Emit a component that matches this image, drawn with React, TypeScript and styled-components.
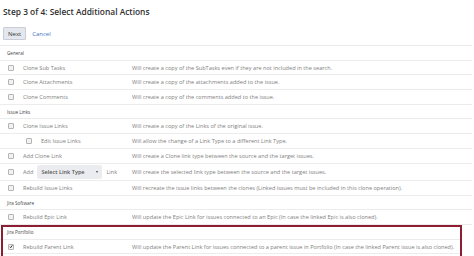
import styled, { createGlobalStyle } from "styled-components";

const GlobalStyle = createGlobalStyle`
  html, body {
    margin: 0;
    padding: 0;
    background: #ffffff;
  }
  body {
    font-family: "Open Sans", "Noto Sans", sans-serif;
    color: #333333;
  }
`;

const Page = styled.div`
  box-sizing: border-box;
  width: 474px;
  height: 256px;
  overflow: hidden;
  padding: 4px 0 0 0;
`;

const Title = styled.h1`
  margin: 0 0 0 3px;
  font-size: 8.4px;
  line-height: 16px;
  font-weight: 600;
  color: #2f2f2f;
`;

const Actions = styled.div`
  display: flex;
  align-items: center;
  gap: 6px;
  margin: 7px 0 5px 3px;
`;

const Button = styled.button`
  box-sizing: border-box;
  height: 13px;
  padding: 0 4px;
  font-family: inherit;
  font-size: 6px;
  color: #333333;
  background: #e4e8ee;
  border: 1px solid #c9ced6;
  border-radius: 1px;
`;

const LinkButton = styled.span`
  font-size: 6px;
  color: #3b73c4;
`;

const Table = styled.div`
  width: 472px;
  border-top: 1px solid #ececec;
`;

const SectionRow = styled.div`
  box-sizing: border-box;
  height: 14.7px;
  display: flex;
  align-items: center;
  padding-left: 7px;
  font-size: 4.6px;
  color: #444444;
  border-bottom: 1px solid #ececec;
`;

const Row = styled.div<{ $tall?: boolean }>`
  box-sizing: border-box;
  height: ${({ $tall }) => ($tall ? "17.5px" : "14.7px")};
  display: grid;
  grid-template-columns: 132px 1fr;
  align-items: center;
  border-bottom: 1px solid #ececec;
  font-size: 5.6px;
  color: #808080;
  white-space: nowrap;
`;

const Label = styled.div<{ $indent?: boolean }>`
  display: flex;
  align-items: center;
  gap: 9px;
  padding-left: ${({ $indent }) => ($indent ? "26px" : "8px")};
`;

const Box = styled.span<{ $checked?: boolean }>`
  box-sizing: border-box;
  width: 6px;
  height: 6px;
  border: 1px solid #b4b4b4;
  border-radius: 1px;
  background: #f2f2f2;
  display: inline-flex;
  align-items: center;
  justify-content: center;
`;

const Select = styled.span`
  display: inline-flex;
  align-items: center;
  justify-content: space-between;
  box-sizing: border-box;
  width: 65px;
  height: 14px;
  padding: 0 4px;
  margin-left: -5px;
  background: #ebecf0;
  border-radius: 2px;
  font-weight: 600;
  color: #555555;
`;

const Caret = styled.span`
  width: 0;
  height: 0;
  border-left: 1.5px solid transparent;
  border-right: 1.5px solid transparent;
  border-top: 2px solid #444444;
`;

const Suffix = styled.span`
  margin-left: -5px;
`;

const Description = styled.div`
  overflow: visible;
`;

/* red annotation frame drawn over the group so the rows keep their columns */
const Highlight = styled.div`
  position: relative;
  width: 462px;

  &::after {
    content: "";
    position: absolute;
    inset: 0 0 -8px 1px;
    border: 2px solid #8c1d32;
    pointer-events: none;
  }
`;

function Checkbox({ checked }: { checked?: boolean }) {
  return (
    <Box $checked={checked}>
      {checked && (
        <svg width="5" height="5" viewBox="0 0 10 10">
          <path d="M2 5.5 L4.2 8 L8.5 2" fill="none" stroke="#222" strokeWidth="2.2" />
        </svg>
      )}
    </Box>
  );
}

type Item = { label: string; desc: string; indent?: boolean };

const general: Item[] = [
  { label: "Clone Sub Tasks", desc: "Will create a copy of the SubTasks even if they are not included in the search." },
  { label: "Clone Attachments", desc: "Will create a copy of the attachments added to the issue." },
  { label: "Clone Comments", desc: "Will create a copy of the comments added to the issue." },
];

const links: Item[] = [
  { label: "Clone Issue Links", desc: "Will create a copy of the Links of the original issue." },
  { label: "Edit Issue Links", desc: "Will allow the change of a Link Type to a different Link Type.", indent: true },
  { label: "Add Clone Link", desc: "Will create a Clone link type between the source and the target issues." },
];

function OptionRow({ item, checked }: { item: Item; checked?: boolean }) {
  return (
    <Row>
      <Label $indent={item.indent}>
        <Checkbox checked={checked} />
        {item.label}
      </Label>
      <Description>{item.desc}</Description>
    </Row>
  );
}

export default function App() {
  return (
    <Page>
      <GlobalStyle />
      <Title>Step 3 of 4: Select Additional Actions</Title>
      <Actions>
        <Button>Next</Button>
        <LinkButton>Cancel</LinkButton>
      </Actions>
      <Table>
        <SectionRow>General</SectionRow>
        {general.map((g) => (
          <OptionRow key={g.label} item={g} />
        ))}
        <SectionRow>Issue Links</SectionRow>
        {links.map((g) => (
          <OptionRow key={g.label} item={g} />
        ))}
        <Row $tall>
          <Label>
            <Checkbox />
            Add
            <Select>
              Select Link Type
              <Caret />
            </Select>
            <Suffix>Link</Suffix>
          </Label>
          <Description>Will create the selected link type between the source and the target issues.</Description>
        </Row>
        <OptionRow
          item={{
            label: "Rebuild Issue Links",
            desc: "Will recreate the issue links between the clones (Linked issues must be included in this clone operation).",
          }}
        />
        <SectionRow>Jira Software</SectionRow>
        <OptionRow
          item={{
            label: "Rebuild Epic Link",
            desc: "Will update the Epic Link for issues connected to an Epic (In case the linked Epic is also cloned).",
          }}
        />
        <Highlight>
          <SectionRow>Jira Portfolio</SectionRow>
          <OptionRow
            checked
            item={{
              label: "Rebuild Parent Link",
              desc: "Will update the Parent Link for issues connected to a parent issue in Portfolio (In case the linked Parent issue is also cloned).",
            }}
          />
        </Highlight>
      </Table>
    </Page>
  );
}
